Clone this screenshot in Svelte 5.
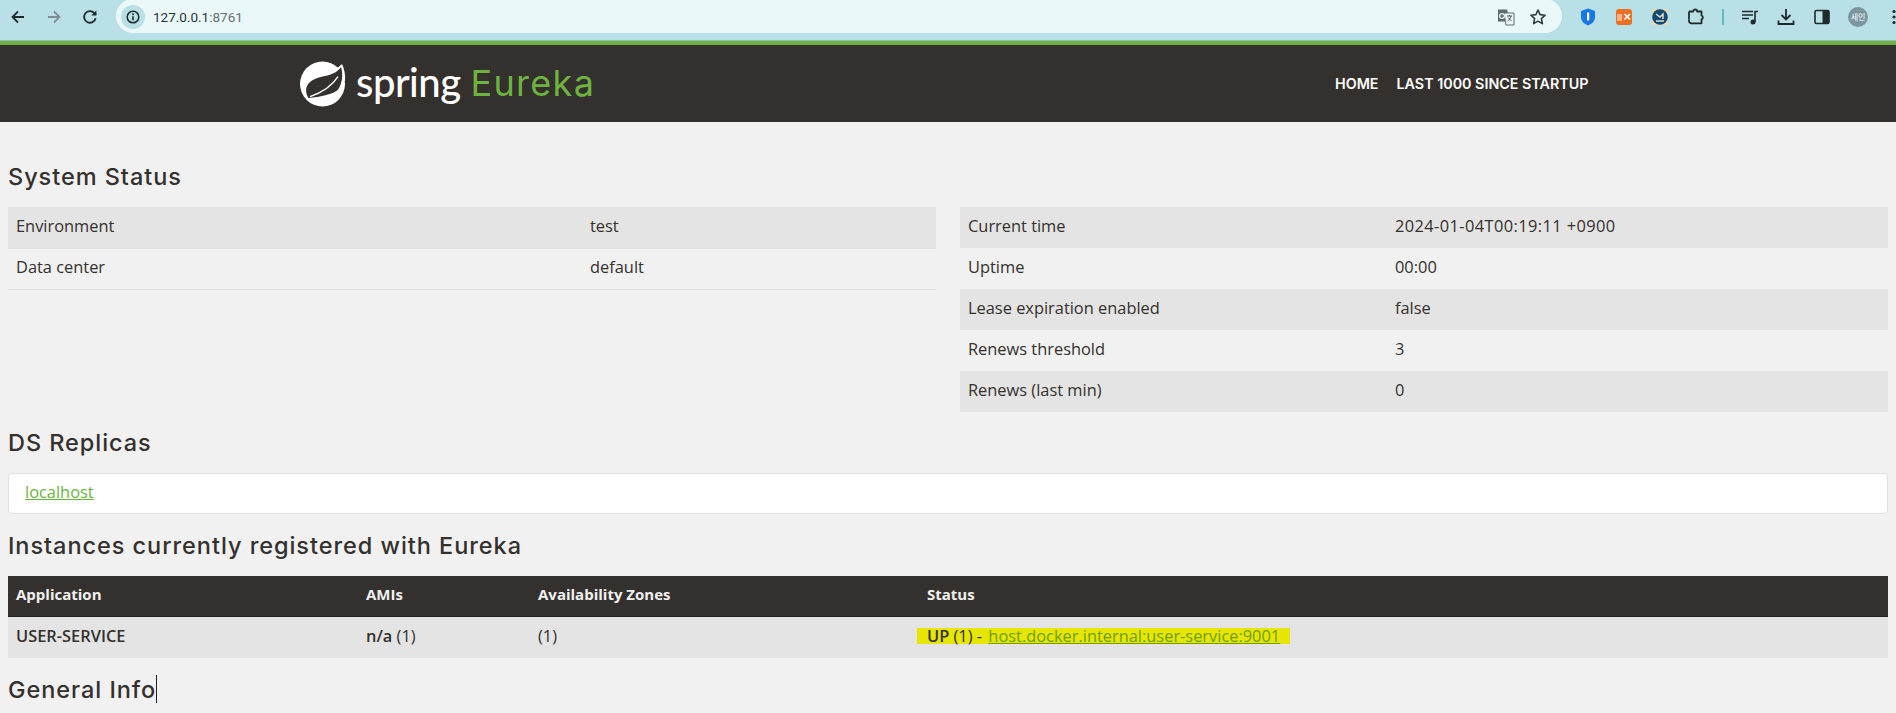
<script>
  const systemLeft = [
    ["Environment", "test"],
    ["Data center", "default"],
  ];
  const systemRight = [
    ["Current time", "2024-01-04T00:19:11 +0900"],
    ["Uptime", "00:00"],
    ["Lease expiration enabled", "false"],
    ["Renews threshold", "3"],
    ["Renews (last min)", "0"],
  ];
</script>

<div class="chrome">
  <div class="nav-btn">
    <svg width="18" height="18" viewBox="0 0 18 18"><path d="M15 9H4M9 3.5 3.5 9 9 14.5" fill="none" stroke="#1f2a2d" stroke-width="1.8" /></svg>
  </div>
  <div class="nav-btn">
    <svg width="18" height="18" viewBox="0 0 18 18"><path d="M3 9h11M9 3.5 14.5 9 9 14.5" fill="none" stroke="#7e8f94" stroke-width="1.8" /></svg>
  </div>
  <div class="nav-btn">
    <svg width="18" height="18" viewBox="0 0 18 18"><path d="M14.6 10.2A5.8 5.8 0 1 1 13.2 5L15 6.6" fill="none" stroke="#1f2a2d" stroke-width="1.8" /><path d="M15.4 2.4v5h-5z" fill="#1f2a2d" /></svg>
  </div>

  <div class="omnibox">
    <span class="info-chip">
      <svg width="14" height="14" viewBox="0 0 14 14"><circle cx="7" cy="7" r="5.8" fill="none" stroke="#1f2a2d" stroke-width="1.5" /><path d="M7 6.2v4" stroke="#1f2a2d" stroke-width="1.6" /><circle cx="7" cy="4.2" r=".95" fill="#1f2a2d" /></svg>
    </span>
    <span class="url">127.0.0.1<span class="port">:8761</span></span>
    <span class="omni-actions">
      <svg width="18" height="18" viewBox="0 0 18 18">
        <path d="M1 1.500h9l1 3h-1v9H1z" fill="#5f6a6d" />
        <path d="M7 5h10v12H9z" fill="#eef6f7" stroke="#5f6a6d" stroke-width="1" />
        <circle cx="5" cy="8" r="2.400" fill="none" stroke="#eef6f7" stroke-width="1.200" />
        <path d="M10 8h5M12.500 7v1M14 8c-.5 2.500-2 4-3.500 5M11 9.500l3.500 3.500" fill="none" stroke="#4c5659" stroke-width="1" />
      </svg>
      <svg width="18" height="18" viewBox="0 0 18 18"><path d="m9 2 2.100 4.600 5 .6-3.700 3.400 1 5L9 13.100l-4.400 2.500 1-5L1.900 7.200l5-.6z" fill="none" stroke="#30393c" stroke-width="1.600" stroke-linejoin="round" /></svg>
    </span>
  </div>

  <div class="nav-btn">
    <svg width="16" height="18" viewBox="0 0 16 18"><path d="M8 .5 15 3v6c0 4-3 7-7 8.500C4 16 1 13 1 9V3z" fill="#1877e8" /><rect x="7" y="4.500" width="2.200" height="8" fill="#fff" /></svg>
  </div>
  <div class="nav-btn">
    <span class="ext-orange"><i></i>×</span>
  </div>
  <div class="nav-btn">
    <svg width="16" height="16" viewBox="0 0 16 16"><rect width="16" height="16" fill="#f0d8ae" /><circle cx="8" cy="8" r="7.800" fill="#0f4a75" /><path d="M4 5l4 3 3-3v5M4 12h8" fill="none" stroke="#e8dcc0" stroke-width="1.500" /></svg>
  </div>
  <div class="nav-btn">
    <svg width="18" height="18" viewBox="0 0 18 18"><path d="M2 3.500h4.200a2 2 0 0 1 4 0h4.300v4a2 2 0 0 1 0 3.800v4H4.500A2.500 2.500 0 0 1 2 13V11.500" fill="none" stroke="#1f2a2d" stroke-width="1.800" stroke-linejoin="round" /><path d="M2 3.500v8" stroke="#1f2a2d" stroke-width="1.800" /></svg>
  </div>
  <span class="divider"></span>
  <div class="nav-btn">
    <svg width="18" height="18" viewBox="0 0 18 18"><path d="M1 3.500h11M1 7h11M1 10.500h7" stroke="#1f2a2d" stroke-width="1.600" /><circle cx="12" cy="14" r="2.500" fill="#1f2a2d" /><path d="M14 14V3.500h3" fill="none" stroke="#1f2a2d" stroke-width="1.600" /></svg>
  </div>
  <div class="nav-btn">
    <svg width="18" height="18" viewBox="0 0 18 18"><path d="M9 1v10M4.500 7 9 11.500 13.500 7M1.500 12.500v3.500h15v-3.500" fill="none" stroke="#1f2a2d" stroke-width="1.800" /></svg>
  </div>
  <div class="nav-btn">
    <svg width="16" height="16" viewBox="0 0 16 16"><rect x="1" y="1.500" width="14" height="13" rx="1.500" fill="none" stroke="#1f2a2d" stroke-width="1.600" /><rect x="8.500" y="1.500" width="6.500" height="13" fill="#1f2a2d" /></svg>
  </div>
  <div class="nav-btn"><span class="avatar">세인</span></div>
  <div class="nav-btn">
    <svg width="4" height="16" viewBox="0 0 4 16"><circle cx="2" cy="2.500" r="1.600" fill="#1f2a2d" /><circle cx="2" cy="8" r="1.600" fill="#1f2a2d" /><circle cx="2" cy="13.500" r="1.600" fill="#1f2a2d" /></svg>
  </div>
</div>

<nav class="navbar">
  <div class="brand">
    <svg class="leaf" width="46" height="46" viewBox="0 0 46 46">
      <circle cx="22.500" cy="23" r="22.500" fill="#fff" />
      <path d="M35 9 42 3C44.500 8 45.500 14 45 20L40 18Z" fill="#fff" />
      <path d="M8.300 37C4 29 6.500 23 12 19.500 18 15.500 30 15 36 11 38 9.500 40 7.500 41 6 43.500 14 42 22 38.500 28 35 33 20 36 8.300 37Z" fill="#34302d" />
      <path d="M10 35.700C18 33 30 28 38 15.700" fill="none" stroke="#fff" stroke-width="1.400" />
    </svg>
    <span class="spring">spring</span>
    <span class="eureka">Eureka</span>
  </div>
  <ul class="links">
    <li>Home</li>
    <li>Last 1000 since startup</li>
  </ul>
</nav>

<main>
  <h2 class="first">System Status</h2>
  <div class="status">
    <table class="kv left">
      <tbody>
        {#each systemLeft as row}
          <tr><td>{row[0]}</td><td>{row[1]}</td></tr>
        {/each}
      </tbody>
    </table>
    <table class="kv right">
      <tbody>
        {#each systemRight as row}
          <tr><td>{row[0]}</td><td>{row[1]}</td></tr>
        {/each}
      </tbody>
    </table>
  </div>

  <h2 class="replicas">DS Replicas</h2>
  <div class="panel"><a href="#top">localhost</a></div>

  <h2 class="instances">Instances currently registered with Eureka</h2>
  <table class="apps">
    <thead>
      <tr>
        <th class="c1">Application</th>
        <th class="c2">AMIs</th>
        <th class="c3">Availability Zones</th>
        <th>Status</th>
      </tr>
    </thead>
    <tbody>
      <tr>
        <td><b>USER-SERVICE</b></td>
        <td><b>n/a</b> (1)</td>
        <td>(1)</td>
        <td><span class="marker"><b>UP</b> (1) - <a href="#top">host.docker.internal:user-service:9001</a></span></td>
      </tr>
    </tbody>
  </table>

  <h2 class="general"><span class="caret">General Info</span></h2>
</main>

<style>
  :global(body) {
    margin: 0;
    background: #f1f1f1;
    overflow: hidden;
  }
  .chrome {
    height: 40px;
    display: flex;
    align-items: flex-start;
    background: #b8e0e6;
    border-bottom: 1px solid #98b8bd;
    overflow: hidden;
  }
  .nav-btn {
    width: 36px;
    height: 34px;
    flex-shrink: 0;
    display: flex;
    align-items: center;
    justify-content: center;
  }
  .omnibox {
    width: 1446px;
    height: 34px;
    margin: -1px 8px 0 8px;
    flex-shrink: 0;
    display: flex;
    align-items: center;
    background: #ebf8f9;
    border-radius: 17px;
    box-sizing: border-box;
    padding: 1px 15px 0 5px;
  }
  .info-chip {
    width: 24px;
    height: 24px;
    border-radius: 50%;
    background: #b8e0e6;
    display: flex;
    align-items: center;
    justify-content: center;
  }
  .url {
    margin-left: 8px;
    font: 13.500px "Roboto", sans-serif;
    color: #2a3336;
  }
  .port {
    color: #667275;
  }
  .omni-actions {
    margin-left: auto;
    display: flex;
    align-items: center;
    gap: 14px;
  }
  .ext-orange {
    width: 16px;
    height: 16px;
    border-radius: 3px;
    background: #ee6f22;
    color: #fff;
    display: flex;
    align-items: center;
    justify-content: flex-end;
    font: bold 13px/16px "Liberation Sans", sans-serif;
    padding-right: 1px;
    box-sizing: border-box;
  }
  .ext-orange i {
    width: 5px;
    height: 7px;
    background: #f6b48c;
    margin-right: 1px;
  }
  .divider {
    width: 2px;
    height: 16px;
    margin: 9px 8px 0 8px;
    flex-shrink: 0;
    background: #62bcc6;
  }
  .avatar {
    width: 20px;
    height: 20px;
    border-radius: 50%;
    background: #7c969f;
    color: #fff;
    font: 8px/20px "Noto Sans CJK KR", sans-serif;
    text-align: center;
  }
  .navbar {
    height: 77px;
    border-top: 4px solid #6db33f;
    background: #34302d;
    display: flex;
    align-items: center;
    padding-left: 300px;
  }
  .brand {
    width: 1035px;
    display: flex;
    align-items: center;
  }
  .leaf {
    margin-right: 10px;
  }
  .spring {
    font: 500 40px "Lato", sans-serif;
    color: #fff;
    letter-spacing: -.5px;
    margin-right: 10px;
    line-height: 46px;
    margin-top: -4px;
  }
  .eureka {
    font: 400 36px "Inter", sans-serif;
    color: #6db33f;
    letter-spacing: 1.300px;
    line-height: 46px;
    margin-top: -2px;
  }
  .links {
    list-style: none;
    display: flex;
    gap: 18px;
    margin: 0;
    padding: 0;
    font: 600 14.300px "Inter", sans-serif;
    color: #fff;
    text-transform: uppercase;
  }
  main {
    padding: 0 8px;
    color: #34302d;
    font: 16.400px "Open Sans", sans-serif;
  }
  h2 {
    margin: 0;
    font: 500 23.500px/26px "Inter", sans-serif;
    letter-spacing: .950px;
  }
  h2.first {
    padding-top: 42px;
    padding-bottom: 17px;
  }
  h2.replicas {
    padding-top: 18px;
    padding-bottom: 17px;
  }
  h2.instances {
    padding-top: 19px;
    padding-bottom: 17px;
  }
  h2.general {
    padding-top: 19px;
  }
  .caret {
    border-right: 1px solid #222;
  }
  .status {
    display: flex;
    align-items: flex-start;
    gap: 24px;
  }
  table {
    border-collapse: collapse;
    table-layout: fixed;
    flex: 1;
  }
  .kv td {
    height: 41px;
    padding: 0 8px 4px;
    box-sizing: border-box;
  }
  .kv tr:nth-child(odd) {
    background: #e4e4e4;
  }
  .kv.left tr {
    border-bottom: 1px solid #e0e0e0;
  }
  .kv.left td:first-child {
    width: 574px;
  }
  .kv.right td:first-child {
    width: 427px;
  }
  .kv.right tr:first-child td:last-child {
    letter-spacing: .4px;
  }
  .panel {
    height: 41px;
    box-sizing: border-box;
    padding: 0 16px 4px;
    display: flex;
    align-items: center;
    background: #fff;
    border: 1px solid #dfdfdf;
    border-radius: 4px;
  }
  a {
    color: #6db33f;
  }
  .apps {
    width: 100%;
  }
  .apps th {
    height: 40px;
    padding: 0 8px 3px;
    text-align: left;
    background: #34302d;
    color: #f1f1f1;
    font-size: 15px;
    font-weight: 700;
    box-sizing: border-box;
    border-bottom: 1px solid #262320;
  }
  .apps td {
    height: 42px;
    padding: 0 8px 3px;
    background: #e4e4e4;
    box-sizing: border-box;
  }
  .apps b {
    font-weight: 600;
  }
  .c1 {
    width: 350px;
  }
  .c2 {
    width: 172px;
  }
  .c3 {
    width: 389px;
  }
  .marker {
    background: #e6e600;
    display: inline-block;
    margin-left: -10px;
    padding: 0 10px;
    line-height: 16px;
  }
  .marker a {
    margin-left: 2px;
    color: #6f9e00;
  }
</style>
